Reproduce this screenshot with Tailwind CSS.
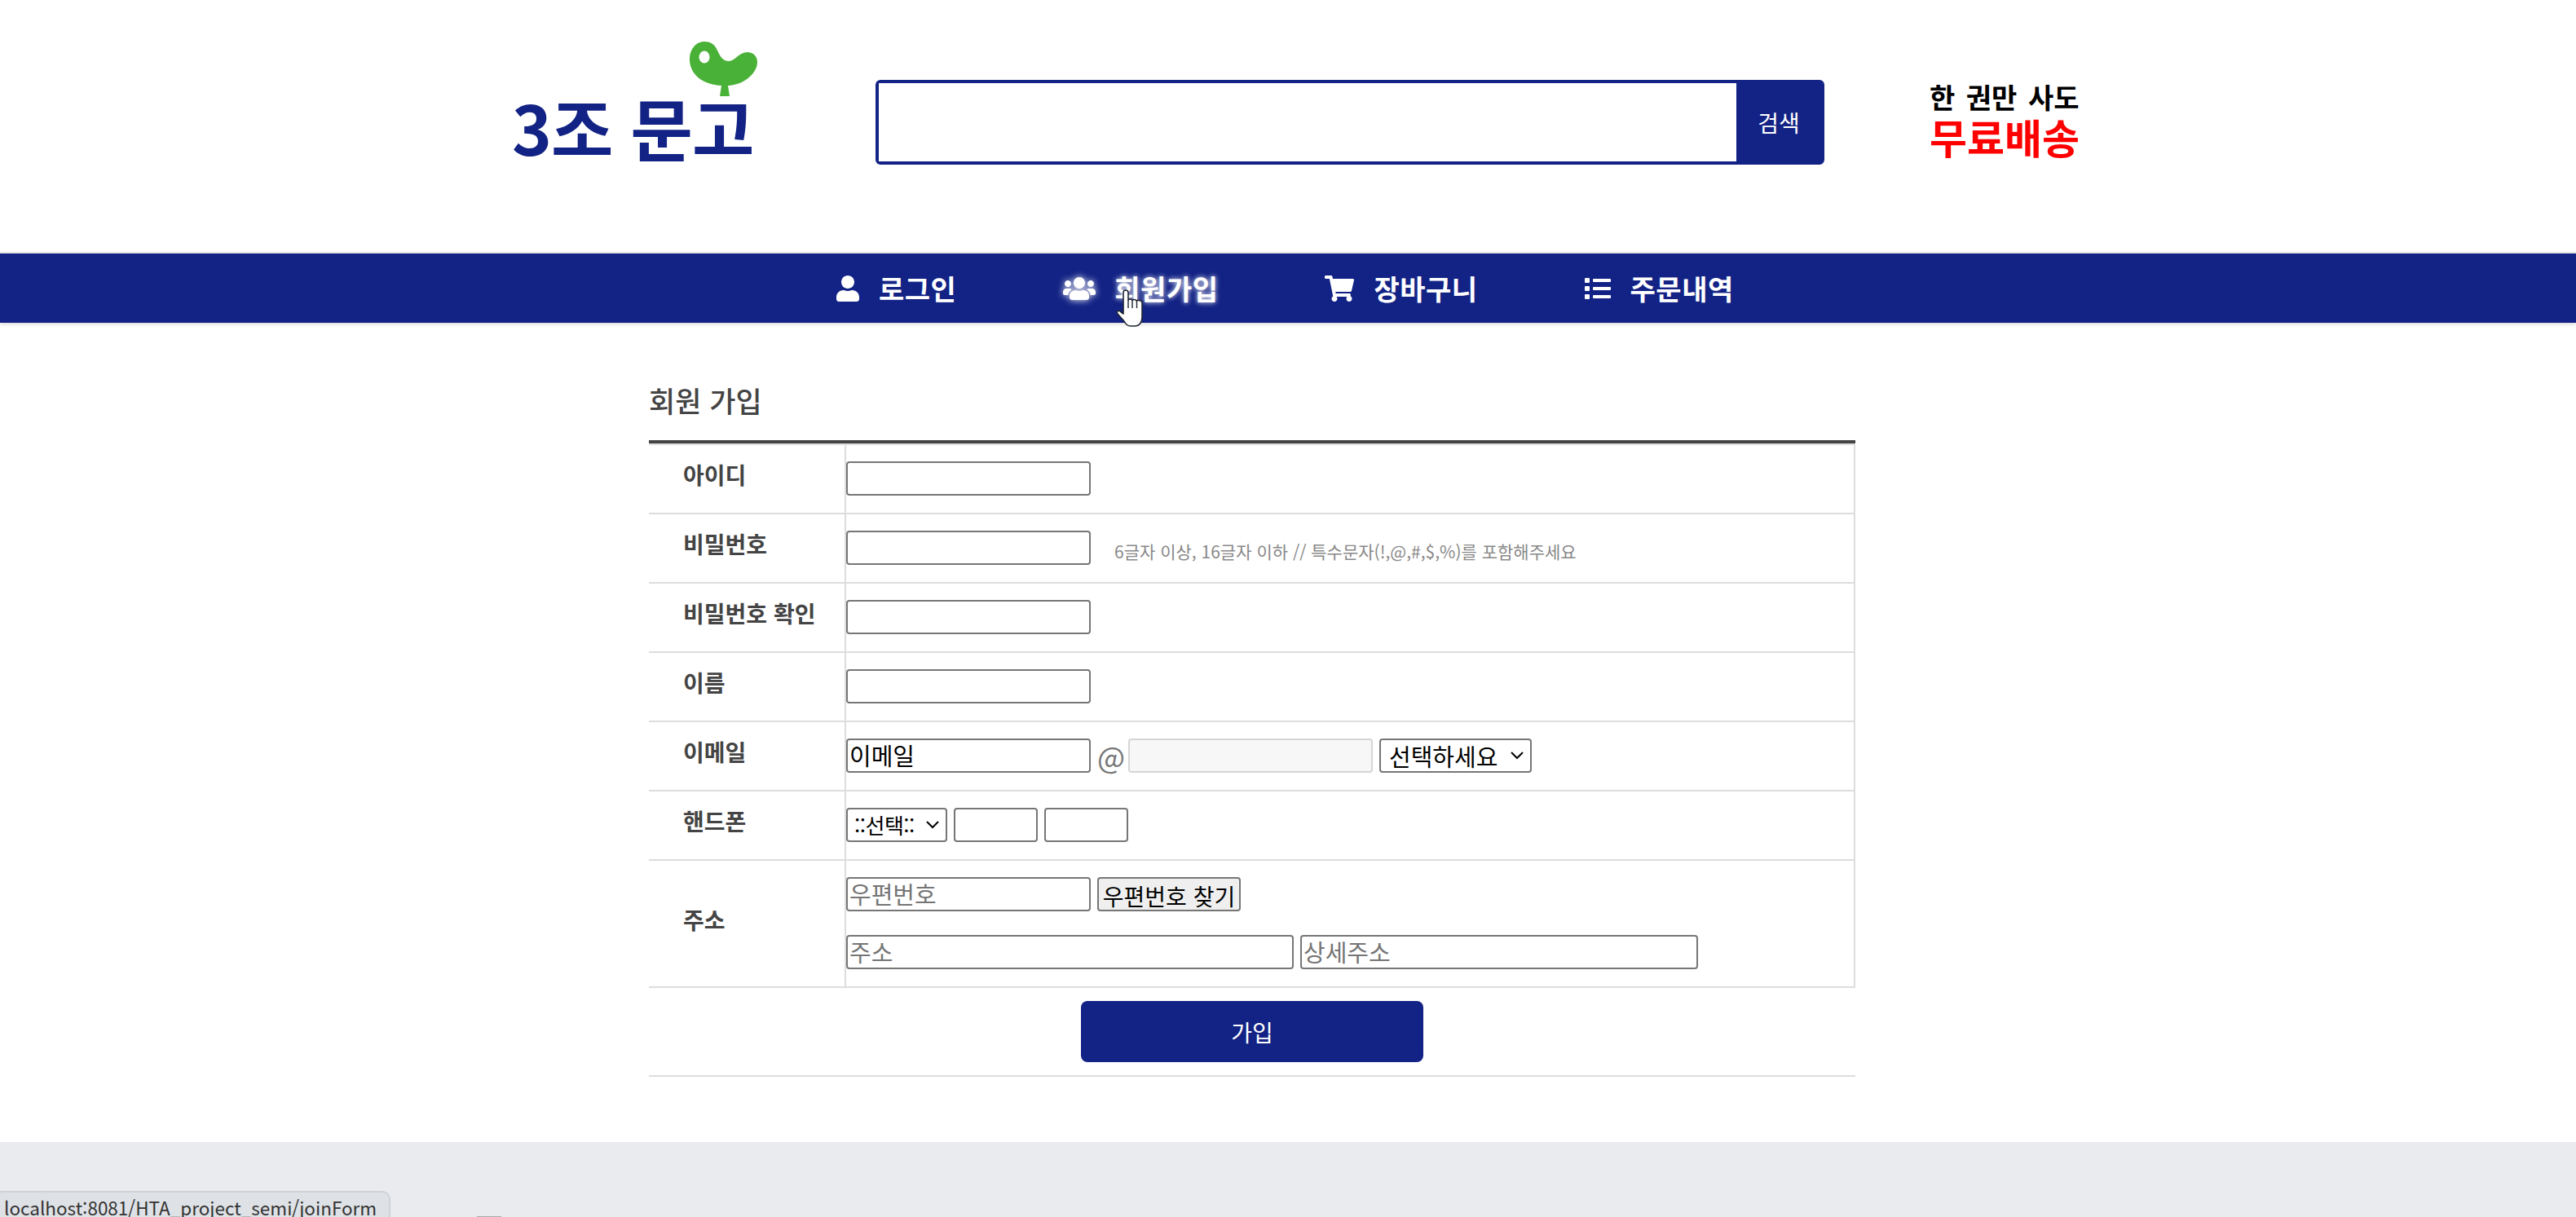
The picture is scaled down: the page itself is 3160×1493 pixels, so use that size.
<!DOCTYPE html>
<html lang="ko">
<head>
  <meta charset="UTF-8" />
  <meta name="viewport" content="width=device-width, initial-scale=1.0"/>
  <title>3조 문고 - 회원 가입</title>
  <script src="https://cdn.jsdelivr.net/npm/@tailwindcss/browser@4"></script>
</head>
<body class="h-[1493px] overflow-hidden bg-white font-['Noto_Sans_CJK_KR',sans-serif]">

  <!-- header -->
  <header class="flex h-[309px] pl-[631px]">
    <a href="#" class="block w-[443px]">
      <svg viewBox="0 0 83 67" class="ml-[215px] mt-[51px] h-[67px] w-[83px]">
        <path fill="#4ab138" d="M18 0C27 0 31 4 34 11C38 19 41 24 48 24C56 24 60 13 71 13C78 13 83 18 83 25C83 38 68 53 47 54L49 67L37 67L39 54C16 53 0 40 0 22C0 9 8 0 18 0Z"/>
        <ellipse cx="18" cy="19" rx="6.5" ry="7.5" fill="#fff"/>
      </svg>
      <div class="-ml-[3px] mt-[-9px] text-[83px] leading-[92px] font-bold tracking-[-1px] whitespace-nowrap text-[#132385]">3조 문고</div>
    </a>
    <form class="mt-[98px] flex h-[104px] w-[1164px] rounded-[6px] border-4 border-[#132385]">
      <input type="text" class="min-w-0 flex-1 bg-white outline-none" />
      <button type="button" class="w-[104px] bg-[#132385] text-[28px] text-white">검색</button>
    </form>
    <div class="ml-[129px] mt-[98px] font-bold whitespace-nowrap">
      <div class="text-[34px] leading-[42px] [word-spacing:4px] text-black">한 권만 사도</div>
      <div class="text-[50px] leading-[54px] text-[#ff0000]">무료배송</div>
    </div>
  </header>

  <!-- nav -->
  <nav class="relative flex h-[87px] items-center gap-[131px] border-t-2 border-[#e5e5e5] bg-[#132385] pl-[1026px] text-[34px] font-bold tracking-[0.5px] text-white shadow-[0_2px_4px_rgba(0,0,0,0.15)]">
    <a href="#" class="flex items-center gap-[24px]">
      <svg viewBox="0 0 448 512" class="h-[32px] w-[28px] fill-white"><path d="M224 256c70.7 0 128-57.3 128-128S294.7 0 224 0 96 57.3 96 128s57.3 128 128 128zm89.6 32h-16.7c-22.2 10.2-46.9 16-72.9 16s-50.6-5.8-72.9-16h-16.7C60.2 288 0 348.2 0 422.4V464c0 26.5 21.5 48 48 48h352c26.5 0 48-21.5 48-48v-41.6c0-74.2-60.2-134.4-134.4-134.4z"/></svg>
      <span>로그인</span>
    </a>
    <a href="#" class="flex items-center gap-[23px] [text-shadow:0_0_6px_#ffffff]">
      <svg viewBox="0 0 640 512" class="h-[32px] w-[40px] fill-white drop-shadow-[0_0_4px_#ffffff]"><path d="M96 224c35.3 0 64-28.7 64-64s-28.7-64-64-64-64 28.7-64 64 28.7 64 64 64zm448 0c35.3 0 64-28.7 64-64s-28.7-64-64-64-64 28.7-64 64 28.7 64 64 64zm32 32h-64c-17.6 0-33.5 7.1-45.1 18.6 40.3 22.1 68.9 62 75.1 109.4h66c17.7 0 32-14.3 32-32v-32c0-35.3-28.7-64-64-64zm-256 0c61.9 0 112-50.1 112-112S381.9 32 320 32 208 82.1 208 144s50.1 112 112 112zm76.8 32h-8.3c-20.8 10-43.9 16-68.5 16s-47.6-6-68.5-16h-8.3C179.6 288 128 339.6 128 403.2V432c0 26.5 21.5 48 48 48h288c26.5 0 48-21.5 48-48v-28.8c0-63.6-51.6-115.2-115.2-115.2zm-223.7-13.4C161.5 263.1 145.6 256 128 256H64c-35.3 0-64 28.7-64 64v32c0 17.7 14.3 32 32 32h65.9c6.3-47.4 34.9-87.3 75.2-109.4z"/></svg>
      <span>회원가입</span>
    </a>
    <a href="#" class="flex items-center gap-[24px]">
      <svg viewBox="0 0 576 512" class="h-[32px] w-[36px] fill-white"><path d="M528.12 301.319l47.273-208C578.806 78.301 567.391 64 551.99 64H159.208l-9.166-44.81C147.758 8.021 137.93 0 126.529 0H24C10.745 0 0 10.745 0 24v16c0 13.255 10.745 24 24 24h69.883l70.248 343.435C147.325 417.1 136 435.222 136 456c0 30.928 25.072 56 56 56s56-25.072 56-56c0-15.674-6.447-29.835-16.824-40h209.647C430.447 426.165 424 440.326 424 456c0 30.928 25.072 56 56 56s56-25.072 56-56c0-22.172-12.888-41.332-31.579-50.405l5.517-24.276c3.413-15.018-8.002-29.319-23.403-29.319H218.117l-6.545-32h293.145c11.206 0 20.92-7.754 23.403-18.681z"/></svg>
      <span>장바구니</span>
    </a>
    <a href="#" class="flex items-center gap-[24px]">
      <svg viewBox="0 0 512 512" class="h-[32px] w-[32px] fill-white"><path d="M80 368H16a16 16 0 0 0-16 16v64a16 16 0 0 0 16 16h64a16 16 0 0 0 16-16v-64a16 16 0 0 0-16-16zm0-320H16A16 16 0 0 0 0 64v64a16 16 0 0 0 16 16h64a16 16 0 0 0 16-16V64a16 16 0 0 0-16-16zm0 160H16a16 16 0 0 0-16 16v64a16 16 0 0 0 16 16h64a16 16 0 0 0 16-16v-64a16 16 0 0 0-16-16zm416 176H176a16 16 0 0 0-16 16v32a16 16 0 0 0 16 16h320a16 16 0 0 0 16-16v-32a16 16 0 0 0-16-16zm0-320H176a16 16 0 0 0-16 16v32a16 16 0 0 0 16 16h320a16 16 0 0 0 16-16V80a16 16 0 0 0-16-16zm0 160H176a16 16 0 0 0-16 16v32a16 16 0 0 0 16 16h320a16 16 0 0 0 16-16v-32a16 16 0 0 0-16-16z"/></svg>
      <span>주문내역</span>
    </a>
    <!-- mouse pointer -->
    <svg viewBox="0 0 32 46" class="absolute left-[1370px] top-[44px] h-[46px] w-[32px]">
      <path fill="#fff" stroke="#1f2430" stroke-width="1.6" stroke-linejoin="round" d="M8 4C8 2 9.5 1 11 1C12.5 1 14 2 14 4V13C15 11.5 18 11.5 19 13.5C20 12 23 12 24 14C25.5 13 30 13 31 16V34C31 40 28 45 22 45H17C13 45 11 43 9 39L1 30C-0.5 28 1 25.5 3.5 26.5L8 30Z"/>
      <path stroke="#1f2430" stroke-width="1.4" d="M14 13V23M19 13.5V23M24.5 14V23"/>
    </svg>
  </nav>

  <!-- join form -->
  <main class="ml-[796px] h-[1005px] w-[1480px]">
    <h2 class="flex h-[144px] items-center pt-[46px] text-[35px] font-medium text-[#444444]">회원 가입</h2>
    <form class="border-t-4 border-[#444444]">
      <div class="border-t-2 border-[#dddddd]">

        <div class="flex h-[85px] border-b-2 border-[#dddddd]">
          <div class="flex w-[240px] items-center pb-[11px] pl-[42px] text-[28px] font-bold text-[#444444]">아이디</div>
          <div class="flex-1 border-x-2 border-[#dddddd] pt-[20px]">
            <input type="text" class="h-[42px] w-[300px] rounded-[4px] border-2 border-[#767676] bg-white px-[2px] text-[29px]" />
          </div>
        </div>

        <div class="flex h-[85px] border-b-2 border-[#dddddd]">
          <div class="flex w-[240px] items-center pb-[11px] pl-[42px] text-[28px] font-bold text-[#444444]">비밀번호</div>
          <div class="flex flex-1 items-start border-x-2 border-[#dddddd] pt-[20px]">
            <input type="password" class="h-[42px] w-[300px] rounded-[4px] border-2 border-[#767676] bg-white px-[2px] text-[29px]" />
            <span class="ml-[29px] mt-[9px] text-[21px] leading-[32px] text-[#888888]">6글자 이상, 16글자 이하 // 특수문자(!,@,#,$,%)를 포함해주세요</span>
          </div>
        </div>

        <div class="flex h-[85px] border-b-2 border-[#dddddd]">
          <div class="flex w-[240px] items-center pb-[11px] pl-[42px] text-[28px] font-bold text-[#444444]">비밀번호 확인</div>
          <div class="flex-1 border-x-2 border-[#dddddd] pt-[20px]">
            <input type="password" class="h-[42px] w-[300px] rounded-[4px] border-2 border-[#767676] bg-white px-[2px] text-[29px]" />
          </div>
        </div>

        <div class="flex h-[85px] border-b-2 border-[#dddddd]">
          <div class="flex w-[240px] items-center pb-[11px] pl-[42px] text-[28px] font-bold text-[#444444]">이름</div>
          <div class="flex-1 border-x-2 border-[#dddddd] pt-[20px]">
            <input type="text" class="h-[42px] w-[300px] rounded-[4px] border-2 border-[#767676] bg-white px-[2px] text-[29px]" />
          </div>
        </div>

        <div class="flex h-[85px] border-b-2 border-[#dddddd]">
          <div class="flex w-[240px] items-center pb-[11px] pl-[42px] text-[28px] font-bold text-[#444444]">이메일</div>
          <div class="flex flex-1 items-start border-x-2 border-[#dddddd] pt-[20px]">
            <input type="text" value="이메일" class="h-[42px] w-[300px] rounded-[4px] border-2 border-[#767676] bg-white px-[2px] text-[29px] text-black" />
            <span class="ml-[8px] w-[38px] text-[36px] leading-[42px] text-[#777777]">@</span>
            <input type="text" disabled class="h-[42px] w-[300px] rounded-[4px] border-2 border-[#d5d5d5] bg-[#f7f7f7] px-[2px] text-[29px]" />
            <div class="relative ml-[8px]">
              <select class="h-[42px] w-[187px] appearance-none rounded-[4px] border-2 border-[#767676] bg-white pl-[10px] text-[29px] leading-[36px] text-black">
                <option>선택하세요</option>
              </select>
              <svg viewBox="0 0 16 10" class="pointer-events-none absolute right-[10px] top-[16px] h-[10px] w-[16px] fill-none stroke-black stroke-2"><path d="M1 1l7 7 7-7"/></svg>
            </div>
          </div>
        </div>

        <div class="flex h-[85px] border-b-2 border-[#dddddd]">
          <div class="flex w-[240px] items-center pb-[11px] pl-[42px] text-[28px] font-bold text-[#444444]">핸드폰</div>
          <div class="flex flex-1 items-start gap-[8px] border-x-2 border-[#dddddd] pt-[20px]">
            <div class="relative">
              <select class="h-[42px] w-[124px] appearance-none rounded-[4px] border-2 border-[#767676] bg-white pl-[8px] text-[26px] leading-[36px] tracking-[-0.5px] text-black">
                <option>::선택::</option>
              </select>
              <svg viewBox="0 0 16 10" class="pointer-events-none absolute right-[10px] top-[16px] h-[10px] w-[16px] fill-none stroke-black stroke-2"><path d="M1 1l7 7 7-7"/></svg>
            </div>
            <input type="text" class="h-[42px] w-[103px] rounded-[4px] border-2 border-[#767676] bg-white px-[2px] text-[29px]" />
            <input type="text" class="h-[42px] w-[103px] rounded-[4px] border-2 border-[#767676] bg-white px-[2px] text-[29px]" />
          </div>
        </div>

        <div class="flex h-[156px] border-b-2 border-[#dddddd]">
          <div class="flex w-[240px] items-center pb-[11px] pl-[42px] text-[28px] font-bold text-[#444444]">주소</div>
          <div class="flex flex-1 flex-col gap-[29px] border-x-2 border-[#dddddd] pt-[20px]">
            <div class="flex gap-[8px]">
              <input type="text" placeholder="우편번호" class="h-[42px] w-[300px] rounded-[4px] border-2 border-[#767676] bg-white px-[2px] text-[29px] placeholder:text-[#757575]" />
              <button type="button" class="h-[42px] w-[176px] rounded-[4px] border-2 border-[#767676] bg-[#efefef] text-[28px] whitespace-nowrap text-black">우편번호 찾기</button>
            </div>
            <div class="flex gap-[8px]">
              <input type="text" placeholder="주소" class="h-[42px] w-[549px] rounded-[4px] border-2 border-[#767676] bg-white px-[2px] text-[29px] placeholder:text-[#757575]" />
              <input type="text" placeholder="상세주소" class="h-[42px] w-[488px] rounded-[4px] border-2 border-[#767676] bg-white px-[2px] text-[29px] placeholder:text-[#757575]" />
            </div>
          </div>
        </div>

        <div class="flex h-[109px] justify-center border-b-2 border-[#dddddd] pt-[16px]">
          <button type="button" class="h-[75px] w-[420px] rounded-[8px] bg-[#132385] text-[28px] text-white">가입</button>
        </div>
      </div>
    </form>
  </main>

  <!-- footer -->
  <footer class="relative h-[92px] bg-[#e9ebef]">
    <div class="absolute bottom-0 left-0 h-[32px] w-[479px] overflow-hidden rounded-tr-[10px] border-t-2 border-r-2 border-[#cfd2d7] bg-[#dee1e6] pl-[5px] text-[22.5px] leading-[36px] whitespace-nowrap text-[#333333]">localhost:8081/HTA_project_semi/joinForm</div>
    <div class="absolute bottom-0 left-[585px] h-[1px] w-[30px] bg-[#aaaaaa]"></div>
  </footer>
</body>
</html>
